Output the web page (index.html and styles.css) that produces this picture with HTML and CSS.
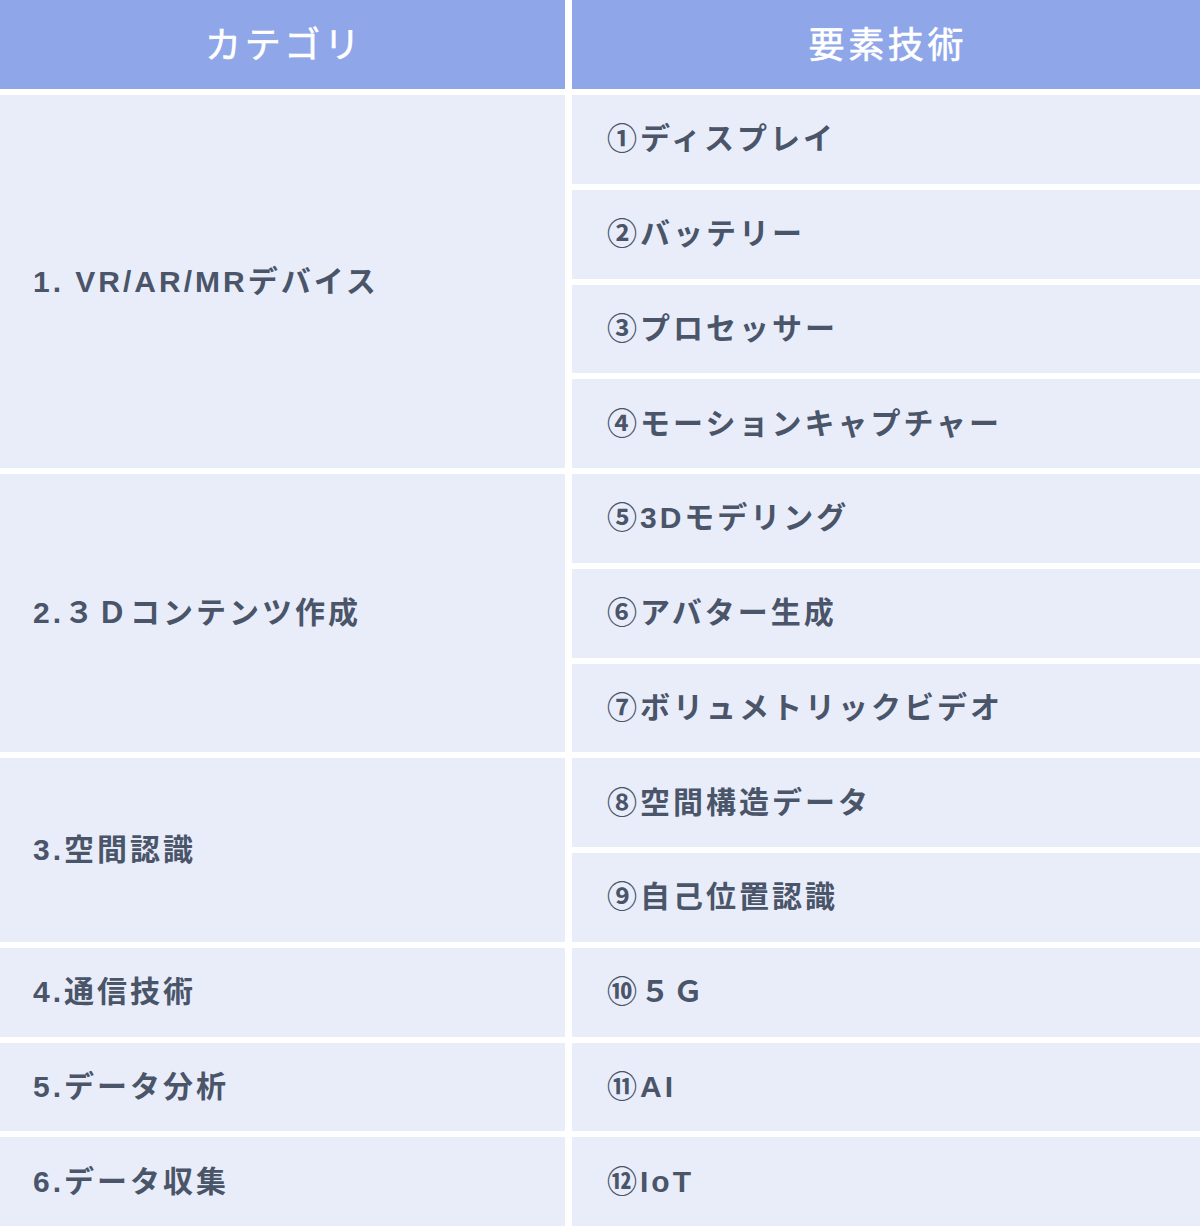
FILE: index.html
```html
<!DOCTYPE html>
<html lang="ja">
<head>
<meta charset="utf-8">
<title>要素技術</title>
<link rel="stylesheet" href="styles.css">
</head>
<body>
<div class="table">
  <div class="head">カテゴリ</div>
  <div class="head">要素技術</div>

  <div class="cat span4">1. VR/AR/MRデバイス</div>
  <div class="tech">①ディスプレイ</div>
  <div class="tech">②バッテリー</div>
  <div class="tech">③プロセッサー</div>
  <div class="tech">④モーションキャプチャー</div>

  <div class="cat span3">2.３Ｄコンテンツ作成</div>
  <div class="tech">⑤3Dモデリング</div>
  <div class="tech">⑥アバター生成</div>
  <div class="tech">⑦ボリュメトリックビデオ</div>

  <div class="cat span2">3.空間認識</div>
  <div class="tech">⑧空間構造データ</div>
  <div class="tech">⑨自己位置認識</div>

  <div class="cat">4.通信技術</div>
  <div class="tech">⑩５Ｇ</div>

  <div class="cat">5.データ分析</div>
  <div class="tech">⑪AI</div>

  <div class="cat">6.データ収集</div>
  <div class="tech">⑫IoT</div>
</div>
</body>
</html>
```
FILE: styles.css
```css
html, body {
  margin: 0;
  padding: 0;
  background: #ffffff;
}

.table {
  display: grid;
  grid-template-columns: 565px 628px;
  grid-template-rows: 89px repeat(12, 1fr);
  column-gap: 7px;
  row-gap: 6px;
  width: 1200px;
  height: 1226px;
  font-family: "Liberation Sans", "Noto Sans CJK JP", sans-serif;
}

.head {
  background: #8fa6e9;
  color: #ffffff;
  font-family: "Noto Sans CJK JP", sans-serif;
  font-size: 36px;
  font-weight: 400;
  -webkit-text-stroke: 0.6px #ffffff;
  letter-spacing: 0.1em;
  display: flex;
  align-items: center;
  justify-content: center;
  padding-left: 0.1em;
  padding-bottom: 6px;
}

.cat, .tech {
  background: #e9edfa;
  color: #4a5569;
  font-size: 30px;
  font-weight: 700;
  letter-spacing: 0.1em;
  display: flex;
  align-items: center;
  padding-bottom: 6px;
}

.cat {
  padding-left: 33px;
}

.tech {
  padding-left: 35px;
}

.span4 { grid-row: span 4; }
.span3 { grid-row: span 3; }
.span2 { grid-row: span 2; }
```
